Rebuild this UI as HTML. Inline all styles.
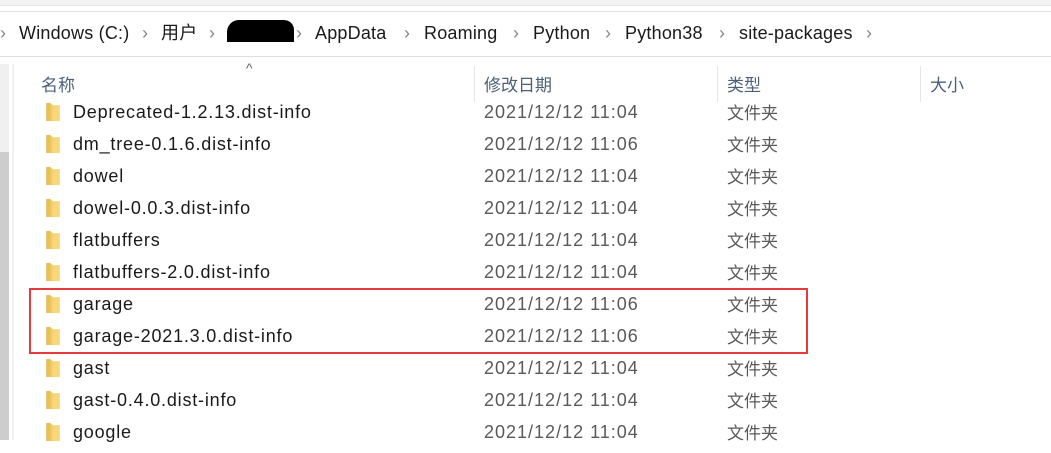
<!DOCTYPE html>
<html><head><meta charset="utf-8"><style>
*{margin:0;padding:0;box-sizing:border-box}
body{width:1051px;height:440px;overflow:hidden;background:#fff;position:relative;font-family:"Liberation Sans","Noto Sans CJK SC",sans-serif;}
.top{position:absolute;left:0;top:0;width:1051px;height:6px;background:#f3f3f3;border-bottom:1px solid #e5e5e5}
.addr{position:absolute;left:0;top:11px;width:1051px;height:46px;border-top:1px solid #e0e0e0;border-bottom:1px solid #e0e0e0;background:#fff}
.bc{position:absolute;top:22px;font-size:18px;color:#1a1a1a;white-space:nowrap;line-height:22px;letter-spacing:0.2px}
.sb1{position:absolute;left:0;top:64px;width:9px;height:88px;background:#f0f0f0}
.sb2{position:absolute;left:0;top:152px;width:9px;height:288px;background:#cdcdcd}
.sep{position:absolute;left:12px;top:64px;width:2px;height:376px;background:#f2f2f2}
.hd{position:absolute;top:75px;font-size:17px;color:#4c607a;line-height:22px}
.cs{position:absolute;top:66px;width:1px;height:36px;background:#e5e5e5}
.row{position:absolute;left:0;height:32px;width:1051px;font-size:18px;line-height:22px}
.row span{position:absolute;top:0;white-space:nowrap}
.n{left:73px;color:#1a1a1a;letter-spacing:0.8px}
.d{left:484px;color:#5a5a5a;letter-spacing:1px}
.t{left:727px;color:#5a5a5a;font-size:17px;top:2px!important}
.f{position:absolute;left:46px;top:1px;width:15px;height:19px}
.red{position:absolute;left:29px;top:288px;width:779px;height:66px;border:2px solid #e8393c}
</style></head><body>
<div class="top"></div>
<div class="addr"></div>
<div class="bc" style="left:0;color:#888">›</div>
<div class="bc" style="left:19px">Windows (C:)</div>
<div class="bc" style="left:142px;color:#888">›</div>
<div class="bc" style="left:161px">用户</div>
<div class="bc" style="left:209px;color:#888">›</div>
<div style="position:absolute;left:227px;top:20px;width:67px;height:22px;background:#000;border-radius:12px 10px 0 0"></div>
<div class="bc" style="left:296px;color:#888">›</div>
<div class="bc" style="left:315px">AppData</div>
<div class="bc" style="left:404px;color:#888">›</div>
<div class="bc" style="left:424px">Roaming</div>
<div class="bc" style="left:513px;color:#888">›</div>
<div class="bc" style="left:533px">Python</div>
<div class="bc" style="left:605px;color:#888">›</div>
<div class="bc" style="left:625px">Python38</div>
<div class="bc" style="left:719px;color:#888">›</div>
<div class="bc" style="left:739px">site-packages</div>
<div class="bc" style="left:866px;color:#888">›</div>
<div class="sb1"></div><div class="sb2"></div><div class="sep"></div>
<div style="position:absolute;left:246px;top:60px;font-size:14px;color:#666">^</div>
<div class="hd" style="left:41px">名称</div>
<div class="hd" style="left:484px">修改日期</div>
<div class="hd" style="left:727px">类型</div>
<div class="hd" style="left:930px">大小</div>
<div class="cs" style="left:474px"></div>
<div class="cs" style="left:717px"></div>
<div class="cs" style="left:920px"></div>
<svg width="0" height="0" style="position:absolute"><defs><symbol id="fd" viewBox="0 0 14 18"><path d="M0 1h4l1 1v16H0z" fill="#e8c05a"/><path d="M4 3h9v15H4z" fill="#f7d77a"/><path d="M4 3l2-1v16H4z" fill="#f0ca62"/></symbol></defs></svg>
<div class="row" style="top:101px"><svg class="f"><use href="#fd"/></svg><span class="n">Deprecated-1.2.13.dist-info</span><span class="d">2021/12/12 11:04</span><span class="t">文件夹</span></div>
<div class="row" style="top:133px"><svg class="f"><use href="#fd"/></svg><span class="n">dm_tree-0.1.6.dist-info</span><span class="d">2021/12/12 11:06</span><span class="t">文件夹</span></div>
<div class="row" style="top:165px"><svg class="f"><use href="#fd"/></svg><span class="n">dowel</span><span class="d">2021/12/12 11:04</span><span class="t">文件夹</span></div>
<div class="row" style="top:197px"><svg class="f"><use href="#fd"/></svg><span class="n">dowel-0.0.3.dist-info</span><span class="d">2021/12/12 11:04</span><span class="t">文件夹</span></div>
<div class="row" style="top:229px"><svg class="f"><use href="#fd"/></svg><span class="n">flatbuffers</span><span class="d">2021/12/12 11:04</span><span class="t">文件夹</span></div>
<div class="row" style="top:261px"><svg class="f"><use href="#fd"/></svg><span class="n">flatbuffers-2.0.dist-info</span><span class="d">2021/12/12 11:04</span><span class="t">文件夹</span></div>
<div class="row" style="top:293px"><svg class="f"><use href="#fd"/></svg><span class="n">garage</span><span class="d">2021/12/12 11:06</span><span class="t">文件夹</span></div>
<div class="row" style="top:325px"><svg class="f"><use href="#fd"/></svg><span class="n">garage-2021.3.0.dist-info</span><span class="d">2021/12/12 11:06</span><span class="t">文件夹</span></div>
<div class="row" style="top:357px"><svg class="f"><use href="#fd"/></svg><span class="n">gast</span><span class="d">2021/12/12 11:04</span><span class="t">文件夹</span></div>
<div class="row" style="top:389px"><svg class="f"><use href="#fd"/></svg><span class="n">gast-0.4.0.dist-info</span><span class="d">2021/12/12 11:04</span><span class="t">文件夹</span></div>
<div class="row" style="top:421px"><svg class="f"><use href="#fd"/></svg><span class="n">google</span><span class="d">2021/12/12 11:04</span><span class="t">文件夹</span></div>
<div class="red"></div>
</body></html>
